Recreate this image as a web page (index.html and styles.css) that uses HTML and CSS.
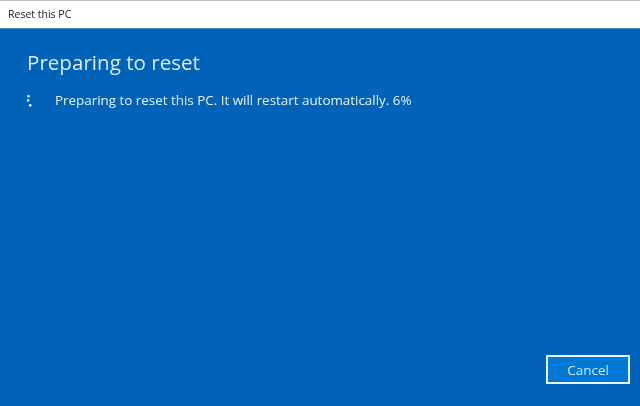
FILE: index.html
```html
<!DOCTYPE html>
<html lang="en">
<head>
<meta charset="utf-8">
<title>Reset this PC</title>
<link rel="stylesheet" href="styles.css">
</head>
<body>
<div class="window">
  <header class="titlebar">Reset this PC</header>
  <main class="content">
    <div class="body">
      <h1 class="heading">Preparing to reset</h1>
      <div class="status">
        <svg class="spinner" width="10" height="16" viewBox="0 0 10 16" aria-hidden="true">
          <circle cx="1.5" cy="4.3" r="1.3"/>
          <circle cx="1" cy="8.3" r="1.4"/>
          <circle cx="3.2" cy="13.3" r="1.4"/>
        </svg>
        <span class="status-text">Preparing to reset this PC. It will restart automatically. 6%</span>
      </div>
    </div>
    <footer class="actions"><button class="cancel" type="button">Cancel</button></footer>
  </main>
</div>
</body>
</html>
```

FILE: styles.css
```css
* { box-sizing: border-box; }
html, body { margin: 0; height: 100%; }
body { font-family: "Open Sans", "Noto Sans", sans-serif; overflow: hidden; }
.window { height: 406px; display: flex; flex-direction: column; background: #0063b8; border-top: 1px solid #c4c4c4; filter: blur(0.4px); }
.titlebar { height: 27px; flex: none; background: #fff; color: #222; font-size: 10.5px; line-height: 27px; padding-left: 8px; }
.content { flex: 1; display: flex; flex-direction: column; justify-content: space-between; padding: 19px 10px 22px 27px; color: #e6f1fa; border-top: 1px solid #3f88cc; }
.heading { margin: 0; font-size: 20.6px; font-weight: 400; line-height: 28px; color: #dcebf7; }
.status { display: flex; align-items: center; margin-top: 14px; height: 20px; }
.spinner { fill: #eaf4fc; flex: none; width: 10px; margin-right: 18px; }
.status-text { font-size: 13.4px; line-height: 20px; }
.actions { display: flex; justify-content: flex-end; }
.cancel { width: 84px; height: 29px; background: #0078d7; border: 2px solid #e8f2fb; color: #d6e8f7; font: 400 13.5px "Open Sans", sans-serif; padding: 0; }
```
